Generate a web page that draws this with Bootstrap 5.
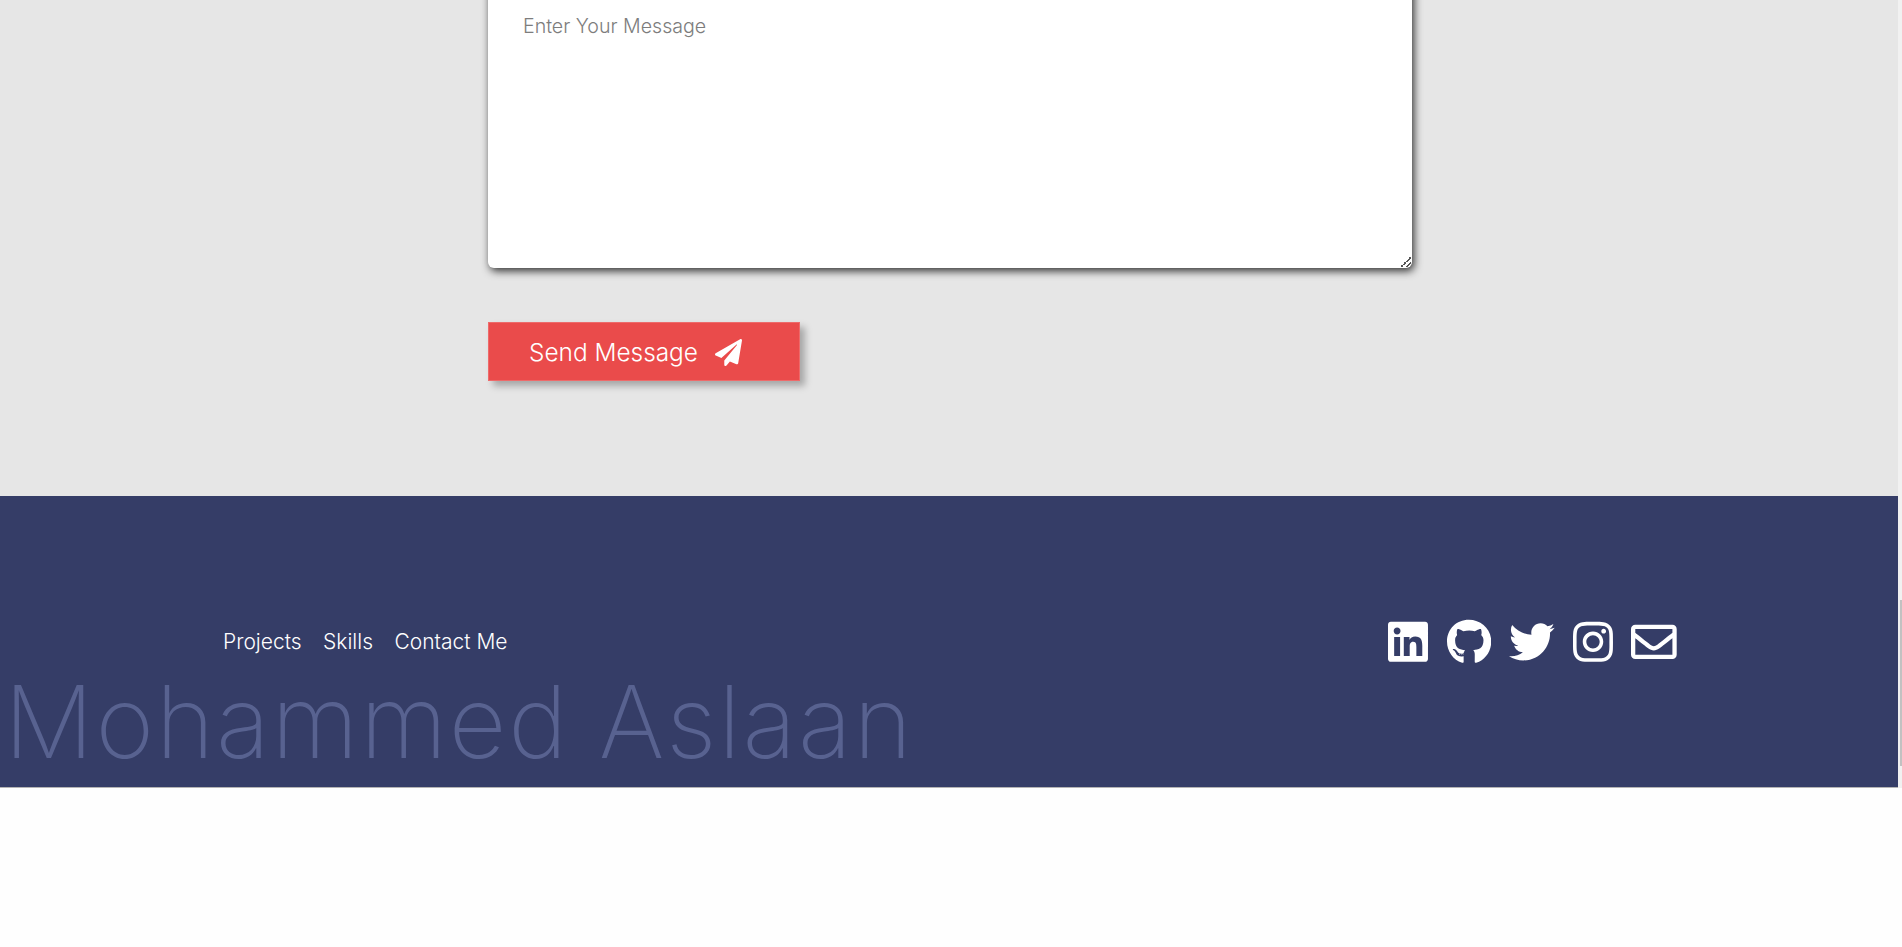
<!DOCTYPE html>
<html lang="en">
<head>
  <meta charset="UTF-8">
  <meta name="viewport" content="width=device-width, initial-scale=1.0">
  <title>Contact</title>
  <link href="https://cdn.jsdelivr.net/npm/bootstrap@5.3.3/dist/css/bootstrap.min.css" rel="stylesheet">
  <style>
    html, body { height: 947px; overflow: hidden; background: #fefefe; }
    body { font-family: Inter, "Liberation Sans", sans-serif; font-weight: 300; }
    .page-inner { width: 1898px; }
    .contact-area { background: #e6e6e6; height: 496px; padding-left: 488px; overflow: hidden; }
    .msg-box {
      width: 924px; height: 300px; margin-top: -32px; padding: 46px 35px 12px;
      font-size: 19.6px; font-weight: 300; line-height: 24px; border: 0; border-radius: 6px;
      box-shadow: 2px 3px 9px rgba(0, 0, 0, .8);
    }
    .msg-box::placeholder { color: #7d7d7d; }
    .msg-box::-webkit-resizer {
      background: linear-gradient(135deg, transparent 45%, #555 45%, #555 55%, transparent 55%, transparent 72%, #555 72%, #555 82%, transparent 82%) right 1px bottom 1px / 10px 10px no-repeat;
    }
    .send-btn {
      width: 312px; height: 59px; margin-top: 54px; padding: 2px 0 0 40px; gap: 17px;
      background: #ea4b4b; color: #fff; font-size: 24.4px; font-weight: 300;
      border: 1px solid #ee6a6a; border-radius: 0; box-shadow: 5px 5px 7px rgba(0, 0, 0, .28);
    }
    .send-btn:hover { background: #ea4b4b; color: #fff; border-color: #ee6a6a; }
    .send-btn svg { width: 27px; height: 27px; fill: #fff; }
    .site-foot { background: #353d67; height: 292px; border-bottom: 1px solid #b4b4b4; overflow: hidden; color: #fff; }
    .foot-top { padding: 123px 221px 0 223px; height: 171px; }
    .foot-links { height: 45.7px; gap: 21.5px; }
    .foot-links a { color: #fff; text-decoration: none; font-size: 21px; }
    .foot-icons { gap: 18.3px; }
    .foot-icons svg { height: 45.7px; fill: #fff; display: block; }
    .foot-name { margin: 5px 0 0; padding-left: 4px; font-size: 100px; font-weight: 250; line-height: 1; letter-spacing: 1.7px; color: #586290; white-space: nowrap; }
    .scroll-rail { position: fixed; top: 0; right: 0; width: 4px; height: 788px; background: #f1f1f1; }
    .scroll-thumb { position: absolute; top: 600px; right: 0; width: 2px; height: 166px; background: #c1c1c1; }
  </style>
</head>
<body>
  <div class="page-inner">
    <!-- Contact form -->
    <section class="contact-area">
      <form action="#" class="d-flex flex-column align-items-start">
        <textarea class="form-control msg-box" placeholder="Enter Your Message"></textarea>
        <button type="button" class="btn send-btn d-flex align-items-center">
          Send Message
          <svg viewBox="0 0 512 512"><path d="M476 3.2L12.5 270.6c-18.1 10.4-15.8 35.6 2.2 43.2L121 358.4l287.3-253.2c5.5-4.9 13.3 2.6 8.6 8.3L176 407v80.5c0 23.6 28.5 32.9 42.5 15.8L282 426l124.6 52.2c14.2 6 30.4-2.9 33-18.2l72-432C515 7.8 493.3-6.8 476 3.2z"/></svg>
        </button>
      </form>
    </section>

    <!-- Footer -->
    <footer class="site-foot">
      <div class="foot-top d-flex justify-content-between align-items-start">
        <div class="foot-links d-flex align-items-center">
          <a href="#">Projects</a>
          <a href="#">Skills</a>
          <a href="#">Contact Me</a>
        </div>
        <div class="foot-icons d-flex align-items-center">
          <svg viewBox="0 0 448 512"><path d="M416 32H31.9C14.3 32 0 46.5 0 64.3v383.4C0 465.5 14.3 480 31.9 480H416c17.6 0 32-14.5 32-32.3V64.3c0-17.8-14.4-32.3-32-32.3zM135.4 416H69V202.2h66.5V416zm-33.2-243c-21.3 0-38.5-17.3-38.5-38.5S80.9 96 102.2 96c21.2 0 38.5 17.3 38.5 38.5 0 21.3-17.2 38.5-38.5 38.5zm282.1 243h-66.4V312c0-24.8-.5-56.7-34.5-56.7-34.6 0-39.9 27-39.9 54.9V416h-66.4V202.2h63.7v29.2h.9c8.9-16.8 30.6-34.5 62.9-34.5 67.2 0 79.7 44.3 79.7 101.9V416z"/></svg>
          <svg viewBox="0 0 496 512"><path d="M165.9 397.4c0 2-2.3 3.6-5.2 3.6-3.3.3-5.6-1.3-5.6-3.6 0-2 2.3-3.6 5.2-3.6 3-.3 5.6 1.3 5.6 3.6zm-31.1-4.5c-.7 2 1.3 4.3 4.3 4.9 2.6 1 5.6 0 6.2-2s-1.3-4.3-4.3-5.2c-2.6-.7-5.5.3-6.2 2.3zm44.2-1.7c-2.9.7-4.9 2.6-4.6 4.9.3 2 2.9 3.3 5.9 2.6 2.9-.7 4.9-2.6 4.6-4.6-.3-1.9-3-3.2-5.9-2.9zM244.8 8C106.1 8 0 113.3 0 252c0 110.9 69.8 205.8 169.5 239.2 12.8 2.3 17.3-5.6 17.3-12.1 0-6.2-.3-40.4-.3-61.4 0 0-70 15-84.7-29.8 0 0-11.4-29.1-27.8-36.6 0 0-22.9-15.7 1.6-15.4 0 0 24.9 2 38.6 25.8 21.9 38.6 58.6 27.5 72.9 20.9 2.3-16 8.8-27.1 16-33.7-55.9-6.2-112.3-14.3-112.3-110.5 0-27.5 7.6-41.3 23.6-58.9-2.6-6.5-11.1-33.3 2.6-67.9 20.9-6.5 69 27 69 27 20-5.6 41.5-8.5 62.8-8.5s42.8 2.9 62.8 8.5c0 0 48.1-33.6 69-27 13.7 34.7 5.2 61.4 2.6 67.9 16 17.7 25.8 31.5 25.8 58.9 0 96.5-58.9 104.2-114.8 110.5 9.2 7.9 17 22.9 17 46.4 0 33.7-.3 75.4-.3 83.6 0 6.5 4.6 14.4 17.3 12.1C428.2 457.8 496 362.9 496 252 496 113.3 383.5 8 244.8 8z"/></svg>
          <svg viewBox="0 0 512 512"><path d="M459.37 151.716c.325 4.548.325 9.097.325 13.645 0 138.72-105.583 298.558-298.558 298.558-59.452 0-114.68-17.219-161.137-47.106 8.447.974 16.568 1.299 25.34 1.299 49.055 0 94.213-16.568 130.274-44.832-46.132-.975-84.792-31.188-98.112-72.772 6.498.974 12.995 1.624 19.818 1.624 9.421 0 18.843-1.3 27.614-3.573-48.081-9.747-84.143-51.98-84.143-102.985v-1.299c13.969 7.797 30.214 12.67 47.431 13.319-28.264-18.843-46.781-51.005-46.781-87.391 0-19.492 5.197-37.36 14.294-52.954 51.655 63.675 129.3 105.258 216.365 109.807-1.624-7.797-2.599-15.918-2.599-24.04 0-57.828 46.782-104.934 104.934-104.934 30.213 0 57.502 12.67 76.67 33.137 23.715-4.548 46.456-13.645 66.599-25.665-7.798 24.366-23.716 44.833-44.832 58.477 20.468-2.599 40.61-7.798 59.453-15.594-14.294 20.792-32.136 39.309-52.278 53.953z"/></svg>
          <svg viewBox="0 0 448 512"><path d="M224.1 141c-63.6 0-114.9 51.3-114.9 114.9s51.3 114.9 114.9 114.9S339 319.5 339 255.9 287.7 141 224.1 141zm0 189.6c-41.1 0-74.7-33.5-74.7-74.7s33.5-74.7 74.7-74.7 74.7 33.5 74.7 74.7-33.6 74.7-74.7 74.7zm146.4-194.3c0 14.9-12 26.8-26.8 26.8-14.9 0-26.8-12-26.8-26.8s12-26.8 26.8-26.8 26.8 12 26.8 26.8zm76.1 27.2c-1.7-35.9-9.9-67.7-36.2-93.9-26.2-26.2-58-34.4-93.9-36.2-37-2.1-147.9-2.1-184.9 0-35.8 1.7-67.6 9.9-93.9 36.1s-34.4 58-36.2 93.9c-2.1 37-2.1 147.9 0 184.9 1.7 35.9 9.9 67.7 36.2 93.9s58 34.4 93.9 36.2c37 2.1 147.9 2.1 184.9 0 35.9-1.7 67.7-9.9 93.9-36.2 26.2-26.2 34.4-58 36.2-93.9 2.1-37 2.1-147.8 0-184.8zM398.8 388c-7.8 19.6-22.9 34.7-42.6 42.6-29.5 11.7-99.5 9-132.1 9s-102.7 2.6-132.1-9c-19.6-7.8-34.7-22.9-42.6-42.6-11.7-29.5-9-99.5-9-132.1s-2.6-102.7 9-132.1c7.8-19.6 22.9-34.7 42.6-42.6 29.5-11.7 99.5-9 132.1-9s102.7-2.6 132.1 9c19.6 7.8 34.7 22.9 42.6 42.6 11.7 29.5 9 99.5 9 132.1s2.7 102.7-9 132.1z"/></svg>
          <svg viewBox="0 0 512 512"><path d="M464 64H48C21.49 64 0 85.49 0 112v288c0 26.51 21.49 48 48 48h416c26.51 0 48-21.49 48-48V112c0-26.51-21.49-48-48-48zm0 48v40.805c-22.422 18.259-58.168 46.651-134.587 106.49-16.841 13.247-50.201 45.072-73.413 44.701-23.208.375-56.579-31.459-73.413-44.701C106.18 199.465 70.425 171.067 48 152.805V112h416zM48 400V214.398c22.914 18.251 55.409 43.862 104.938 82.646 21.857 17.205 60.134 55.186 103.062 54.955 42.717.231 80.509-37.199 103.053-54.947 49.528-38.783 82.032-64.401 104.947-82.653V400H48z"/></svg>
        </div>
      </div>
      <p class="foot-name">Mohammed Aslaan</p>
    </footer>
  </div>

  <!-- the page's thin scrollbar -->
  <div class="scroll-rail"><div class="scroll-thumb"></div></div>

  <script src="https://cdn.jsdelivr.net/npm/bootstrap@5.3.3/dist/js/bootstrap.bundle.min.js"></script>
</body>
</html>
